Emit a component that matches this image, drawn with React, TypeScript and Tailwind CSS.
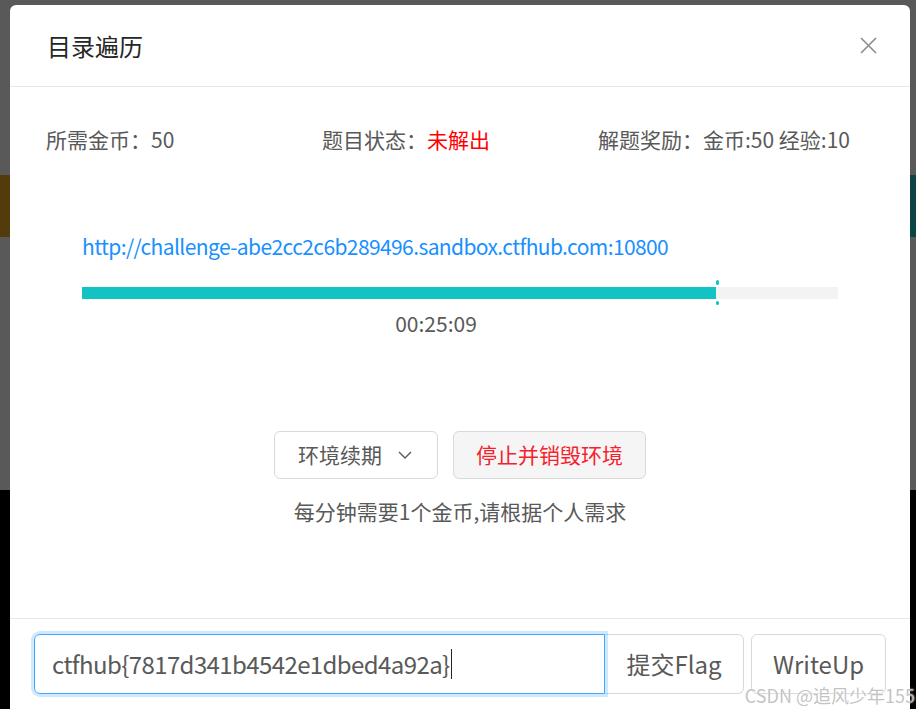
import React from 'react';

const font = { fontFamily: '"Noto Sans CJK SC", "Noto Sans", sans-serif' };

function CloseIcon() {
  return (
    <svg width="17" height="17" viewBox="0 0 17 17" className="block">
      <path d="M1 1 L16 16 M16 1 L1 16" stroke="#8c8c8c" strokeWidth="1.6" fill="none" />
    </svg>
  );
}

function Chevron() {
  return (
    <svg width="14" height="8" viewBox="0 0 14 8" className="block">
      <path d="M1 1 L7 7 L13 1" stroke="#595959" strokeWidth="1.4" fill="none" />
    </svg>
  );
}

const InfoRow = () => (
  <div className="grid grid-cols-3 text-[21px] leading-[32px] text-[#595959]">
    <div>所需金币：50</div>
    <div>
      题目状态：<span className="text-[#ff0000]">未解出</span>
    </div>
    <div>解题奖励：金币:50 经验:10</div>
  </div>
);

const Countdown = () => {
  const percent = 83.9;
  return (
    <div className="mx-[36px]">
      <div className="mt-[75px] text-[21px] leading-[32px] tracking-[-0.6px] text-[#1890ff]">
        http://challenge-abe2cc2c6b289496.sandbox.ctfhub.com:10800
      </div>
      <div className="relative mt-[25px] h-[12px] bg-[#f3f3f3]">
        <div className="h-full bg-[#13c2c2]" style={{ width: `${percent}%` }} />
        <div className="absolute top-[-7px] h-[5px] w-[3px] rounded-sm bg-[#13c2c2]" style={{ left: `${percent}%` }} />
        <div className="absolute bottom-[-6px] h-[4px] w-[3px] rounded-sm bg-[#13c2c2]" style={{ left: `${percent}%` }} />
      </div>
      <div className="mt-[8px] pr-[48px] text-center text-[21px] leading-[32px] text-[#595959]">00:25:09</div>
    </div>
  );
};

export default function App() {
  return (
    <div className="relative h-[709px] w-[916px] overflow-hidden" style={font}>
      {/* page behind the mask */}
      <div className="flex h-full flex-col">
        <div className="h-[175px] bg-[#595959]" />
        <div className="flex h-[62px]">
          <div className="flex-1 bg-[#533b0c]" />
          <div className="flex-1 bg-[#0b4444]" />
        </div>
        <div className="h-[253px] bg-[#595959]" />
        <div className="flex-1 bg-black" />
      </div>

      {/* modal */}
      <div className="absolute left-[10px] top-[5px] w-[900px] rounded-t-[6px] bg-white">
        <div className="flex h-[82px] items-center justify-between border-b border-[#e8e8e8] pl-[37px] pr-[33px]">
          <div className="text-[24px] leading-[36px] text-[#262626]">目录遍历</div>
          <CloseIcon />
        </div>

        <div className="h-[531px] px-[36px] pt-[36px]">
          <InfoRow />
          <Countdown />
          <div className="mt-[92px] flex justify-center gap-[15px] text-[21px]">
            <button className="flex h-[48px] items-center gap-[16px] rounded-[6px] border border-[#d9d9d9] bg-white pl-[23px] pr-[25px] text-[#595959]">
              环境续期
              <Chevron />
            </button>
            <button className="h-[48px] rounded-[6px] border border-[#d9d9d9] bg-[#f5f5f5] px-[22px] text-[#f5222d]">
              停止并销毁环境
            </button>
          </div>
          <div className="mt-[16px] text-center text-[21px] leading-[32px] text-[#595959]">
            每分钟需要1个金币,请根据个人需求
          </div>
        </div>

        <div className="flex border-t border-[#e8e8e8] px-[24px] pb-[15px] pt-[15px]">
          <div className="relative flex h-[60px] flex-1 items-center rounded-l-[6px] border border-[#40a9ff] pl-[17px] text-[24px] text-[#595959] shadow-[0_0_0_3px_rgba(24,144,255,0.2)]">
            <span className="tracking-[-0.6px]">ctfhub{'{'}7817d341b4542e1dbed4a92a{'}'}</span>
            <span className="ml-[1px] h-[30px] w-px bg-[#262626]" />
          </div>
          <button className="h-[60px] w-[139px] rounded-r-[6px] border border-l-0 border-[#d9d9d9] bg-white text-[24px] text-[#595959]">
            提交Flag
          </button>
          <button className="ml-[7px] h-[60px] w-[135px] rounded-[6px] border border-[#d9d9d9] bg-white text-[24px] text-[#595959]">
            WriteUp
          </button>
        </div>
      </div>

      <div className="absolute bottom-[4px] right-[1px] text-[18px] leading-[20px] text-[rgba(185,185,185,0.85)] [text-shadow:0_0_2px_#fff]">
        CSDN @追风少年155
      </div>
    </div>
  );
}
